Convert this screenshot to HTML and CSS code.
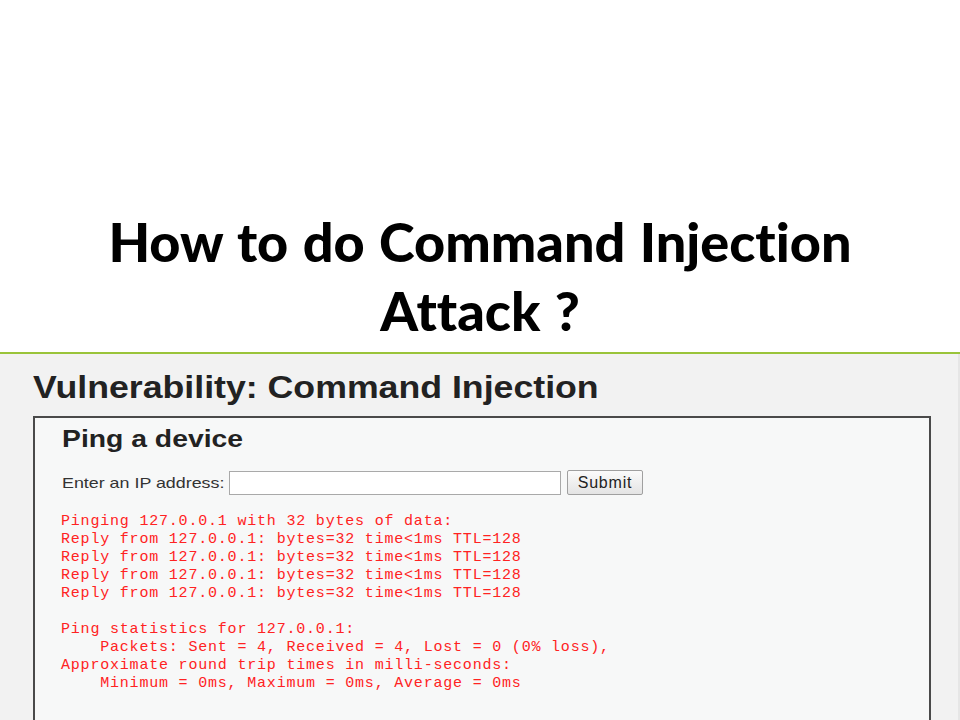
FILE: index.html
```html
<!DOCTYPE html>
<html>
<head>
<meta charset="utf-8">
<link rel="stylesheet" href="styles.css">
</head>
<body>
<header class="slide-title">
  <h1 class="title-text">How to do Command Injection<br>Attack ?</h1>
</header>
<div class="rule"></div>
<main class="page">
  <h2 class="vuln-title">Vulnerability: Command Injection</h2>
  <section class="box">
    <h3 class="box-title">Ping a device</h3>
    <form class="ip-form">
      <label class="ip-label">Enter an IP address:</label>
      <input class="ip-input" type="text">
      <button class="submit-btn" type="button">Submit</button>
    </form>
    <pre class="output">Pinging 127.0.0.1 with 32 bytes of data:
Reply from 127.0.0.1: bytes=32 time&lt;1ms TTL=128
Reply from 127.0.0.1: bytes=32 time&lt;1ms TTL=128
Reply from 127.0.0.1: bytes=32 time&lt;1ms TTL=128
Reply from 127.0.0.1: bytes=32 time&lt;1ms TTL=128

Ping statistics for 127.0.0.1:
    Packets: Sent = 4, Received = 4, Lost = 0 (0% loss),
Approximate round trip times in milli-seconds:
    Minimum = 0ms, Maximum = 0ms, Average = 0ms</pre>
  </section>
</main>
</body>
</html>
```
FILE: styles.css
```css
html, body {
  margin: 0;
  padding: 0;
  background: #ffffff;
  overflow: hidden;
  width: 960px;
  height: 720px;
}
.slide-title {
  height: 352px;
  display: flex;
  flex-direction: column;
  justify-content: flex-end;
  align-items: center;
}
.title-text {
  margin: 0 0 7px 0;
  font-family: Lato, "Open Sans", sans-serif;
  font-weight: 900;
  font-size: 54px;
  line-height: 69px;
  text-align: center;
  color: #000;
  letter-spacing: 0;
  word-spacing: 1.5px;
  font-variant-ligatures: none;
}
.rule {
  height: 2px;
  background: #9ac43a;
}
.page {
  background: #f2f2f2;
  height: 366px;
  padding: 15px 27px 0 33px;
  border-right: 2px solid #e6e6e6;
  box-sizing: border-box;
  width: 960px;
  overflow: hidden;
}
.vuln-title {
  margin: 0 0 11px 0;
  font-family: "Liberation Sans", Arial, sans-serif;
  font-weight: 700;
  font-size: 32px;
  line-height: 36px;
  color: #222;
  transform: scaleX(1.115);
  transform-origin: left center;
  white-space: nowrap;
}
.box {
  border: 2px solid #4a4a4a;
  background: #f7f8f8;
  height: 400px;
  padding: 7px 0 0 27px;
}
.box-title {
  margin: 0 0 17px 0;
  font-family: "Liberation Sans", Arial, sans-serif;
  font-weight: 700;
  font-size: 24px;
  line-height: 28px;
  color: #222;
  transform: scaleX(1.18);
  transform-origin: left center;
  white-space: nowrap;
}
.ip-form {
  display: flex;
  align-items: center;
  margin: 0;
}
.ip-label {
  display: inline-block;
  width: 167px;
  font-family: "Liberation Sans", Arial, sans-serif;
  font-size: 15px;
  color: #333;
  transform: scaleX(1.19);
  transform-origin: left center;
  white-space: nowrap;
}
.ip-input {
  width: 332px;
  height: 24px;
  box-sizing: border-box;
  border: 1px solid #a9a9a9;
  background: #fff;
  margin: 0 6px 0 0;
  padding: 0;
}
.submit-btn {
  width: 76px;
  height: 25px;
  box-sizing: border-box;
  border: 1px solid #a0a0a0;
  border-radius: 2px;
  background: linear-gradient(#fbfbfb, #e4e4e4);
  font-family: "Liberation Sans", Arial, sans-serif;
  font-size: 16px;
  letter-spacing: 0.8px;
  color: #222;
  padding: 0;
}
.output {
  margin: 18px 0 0 -1px;
  font-family: "Liberation Mono", monospace;
  font-size: 15px;
  letter-spacing: 0.8px;
  line-height: 18px;
  color: #ff2222;
}
```
